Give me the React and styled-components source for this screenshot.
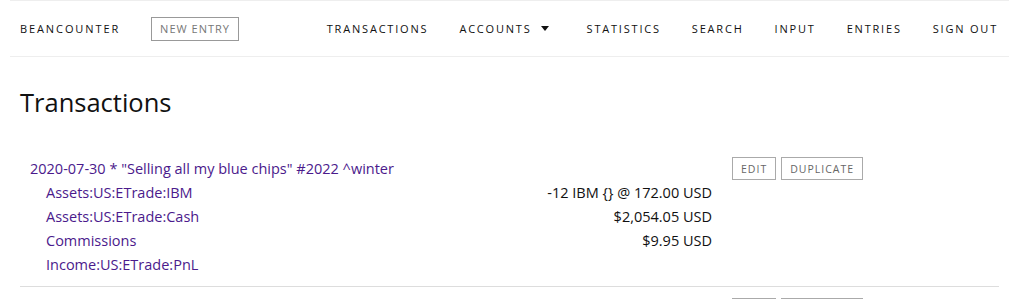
import React from 'react';
import styled, { createGlobalStyle } from 'styled-components';

const GlobalStyle = createGlobalStyle`
  body {
    margin: 0;
    background: #fff;
    font-family: "Open Sans", "Noto Sans", sans-serif;
    color: #222;
  }
`;

const Page = styled.div`
  padding: 0 10px;
`;

const Header = styled.header`
  display: flex;
  align-items: center;
  height: 55px;
  border-top: 1px solid #eee;
  border-bottom: 1px solid #eee;
  padding: 0 10px;
  font-size: 11px;
  letter-spacing: 1.8px;
  text-transform: uppercase;
`;

const Brand = styled.a`
  color: #111;
  text-decoration: none;
  letter-spacing: 1.9px;
  margin-right: 31px;
`;

const NewEntry = styled.button`
  font-family: inherit;
  font-size: 11px;
  letter-spacing: 1px;
  text-transform: uppercase;
  color: #777;
  background: #fff;
  border: 1px solid #999;
  padding: 0 8px;
  height: 24px;
  cursor: pointer;
`;

const Nav = styled.nav`
  display: flex;
  gap: 31px;
  margin-left: auto;
  padding-right: 1px;
`;

const NavItem = styled.a`
  color: #111;
  text-decoration: none;
  display: flex;
  align-items: center;
`;

const Caret = styled.span`
  display: inline-block;
  margin-left: 9px;
  margin-right: 7px;
  border-left: 4.5px solid transparent;
  border-right: 4.5px solid transparent;
  border-top: 5px solid #111;
`;

const Main = styled.main`
  padding: 0 10px;
`;

const Title = styled.h1`
  font-weight: 400;
  font-size: 25.5px;
  margin: 28px 0 27px;
  color: #111;
`;

const Entry = styled.div`
  display: flex;
  align-items: flex-start;
  padding: 11px 0 9px 10px;
  border-bottom: 1px solid #ddd;
`;

const Body = styled.div`
  width: 682px;
  font-size: 14.5px;
  line-height: 24px;
`;

const HeadLine = styled.a`
  display: block;
  color: #4b1a8c;
  text-decoration: none;
`;

const Posting = styled.div`
  display: flex;
  justify-content: space-between;
  padding-left: 16px;
`;

const Account = styled.a`
  color: #4b1a8c;
  text-decoration: none;
`;

const Amount = styled.span`
  color: #111;
`;

const Actions = styled.div`
  display: flex;
  gap: 5px;
  margin-left: 20px;
`;

const SmallButton = styled.button`
  font-family: inherit;
  font-size: 10.5px;
  letter-spacing: 1px;
  text-transform: uppercase;
  color: #666;
  background: #fff;
  border: 1px solid #aaa;
  height: 23px;
  padding: 0 8px;
  cursor: pointer;
`;

const navItems = ['Transactions', 'Accounts', 'Statistics', 'Search', 'Input', 'Entries', 'Sign out'];

const entries = [
  {
    head: '2020-07-30 * "Selling all my blue chips" #2022 ^winter',
    postings: [
      { account: 'Assets:US:ETrade:IBM', amount: '-12 IBM {} @ 172.00 USD' },
      { account: 'Assets:US:ETrade:Cash', amount: '$2,054.05 USD' },
      { account: 'Commissions', amount: '$9.95 USD' },
      { account: 'Income:US:ETrade:PnL', amount: '' },
    ],
  },
  {
    head: '2020-07-28 * "Buying blue chips"',
    postings: [],
  },
];

export default function App() {
  return (
    <>
      <GlobalStyle />
      <Page>
        <Header>
          <Brand href="#">Beancounter</Brand>
          <NewEntry>New Entry</NewEntry>
          <Nav>
            {navItems.map((item) => (
              <NavItem href="#" key={item}>
                {item}
                {item === 'Accounts' && <Caret />}
              </NavItem>
            ))}
          </Nav>
        </Header>
        <Main>
          <Title>Transactions</Title>
          {entries.map((entry, i) => (
            <Entry key={i}>
              <Body>
                <HeadLine href="#">{entry.head}</HeadLine>
                {entry.postings.map((p) => (
                  <Posting key={p.account}>
                    <Account href="#">{p.account}</Account>
                    <Amount>{p.amount}</Amount>
                  </Posting>
                ))}
              </Body>
              <Actions>
                <SmallButton>Edit</SmallButton>
                <SmallButton>Duplicate</SmallButton>
              </Actions>
            </Entry>
          ))}
        </Main>
      </Page>
    </>
  );
}
